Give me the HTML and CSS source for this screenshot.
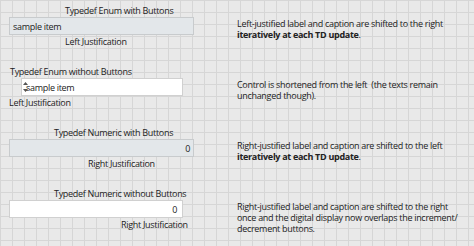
FILE: index.html
```html
<!DOCTYPE html>
<html lang="en">
<head>
    <meta charset="UTF-8">
    <title>Typedef Justification</title>
    <link rel="stylesheet" href="styles.css">
</head>
<body>
    <div class="panel">
        <div class="ctl row1">
            <div class="label">Typedef Enum with Buttons</div>
            <div class="box gray">sample item</div>
            <div class="caption">Left Justification</div>
        </div>
        <p class="note">Left-justified label and caption are shifted to the right<br><b>iteratively at each TD update</b>.</p>

        <div class="ctl row2">
            <div class="label">Typedef Enum without Buttons</div>
            <div class="box white">
                <svg class="arrows" width="5" height="12" viewBox="0 0 5 12"><path d="M2.5 1 L5 4 L0 4 Z M0 8 L5 8 L2.5 11 Z" fill="#555"/></svg>sample item
            </div>
            <div class="caption">Left Justification</div>
        </div>
        <p class="note">Control is shortened from the left &nbsp;(the texts remain<br>unchanged though).</p>

        <div class="ctl row3">
            <div class="label">Typedef Numeric with Buttons</div>
            <div class="box gray num">0</div>
            <div class="caption">Right Justification</div>
        </div>
        <p class="note">Right-justified label and caption are shifted to the left<br><b>iteratively at each TD update</b>.</p>

        <div class="ctl row4">
            <div class="label">Typedef Numeric without Buttons</div>
            <div class="box white num">0</div>
            <div class="caption">Right Justification</div>
        </div>
        <p class="note">Right-justified label and caption are shifted to the right<br>once and the digital display now overlaps the increment/<br>decrement buttons.</p>
    </div>
</body>
</html>
```

FILE: styles.css
```css
body { margin: 0; background: #e8e8e8; font-family: "Open Sans", "Noto Sans", sans-serif; font-size: 9px; letter-spacing: -0.3px; color: #222; }
.panel {
    width: 474px; height: 246px; overflow: hidden;
    background-color: #e9e9e9;
    background-image: linear-gradient(to right, #d6d6d6 1px, transparent 1px), linear-gradient(to bottom, #d6d6d6 1px, transparent 1px);
    background-size: 12px 12px;
    display: grid; grid-template-columns: 237px 237px; grid-auto-rows: 61px;
    padding-top: 5px; box-sizing: border-box;
}
.ctl { display: flex; flex-direction: column; }
.label, .caption { line-height: 12px; white-space: nowrap; }
.box { height: 18px; line-height: 17px; box-sizing: border-box; border: 1px solid #c8cbcd; margin: 0 0 1px 9px; padding: 0 3px; white-space: nowrap; }
.gray { background: #e3e7ea; width: 185px; }
.white { background: #fff; border-color: #d0d0d0; }
.num { text-align: right; }
.row1 .label, .row1 .caption { margin-left: 65px; }
.row2 .label { margin-left: 10px; }
.row2 .caption { margin-left: 9px; }
.row2 .box { width: 162px; margin-left: 21px; padding-left: 1px; display: flex; align-items: center; }
.arrows { margin-right: -2px; flex: none; }
.row3 .label { margin-left: 54px; }
.row3 .caption { margin-left: 88px; }
.row4 .label { margin-left: 54px; }
.row4 .box { width: 174px; padding-right: 5px; }
.row4 .caption { margin-left: 121px; }
.note { margin: 13px 0 0 0; line-height: 11px; white-space: nowrap; }
.note b { font-weight: 700; }
```
